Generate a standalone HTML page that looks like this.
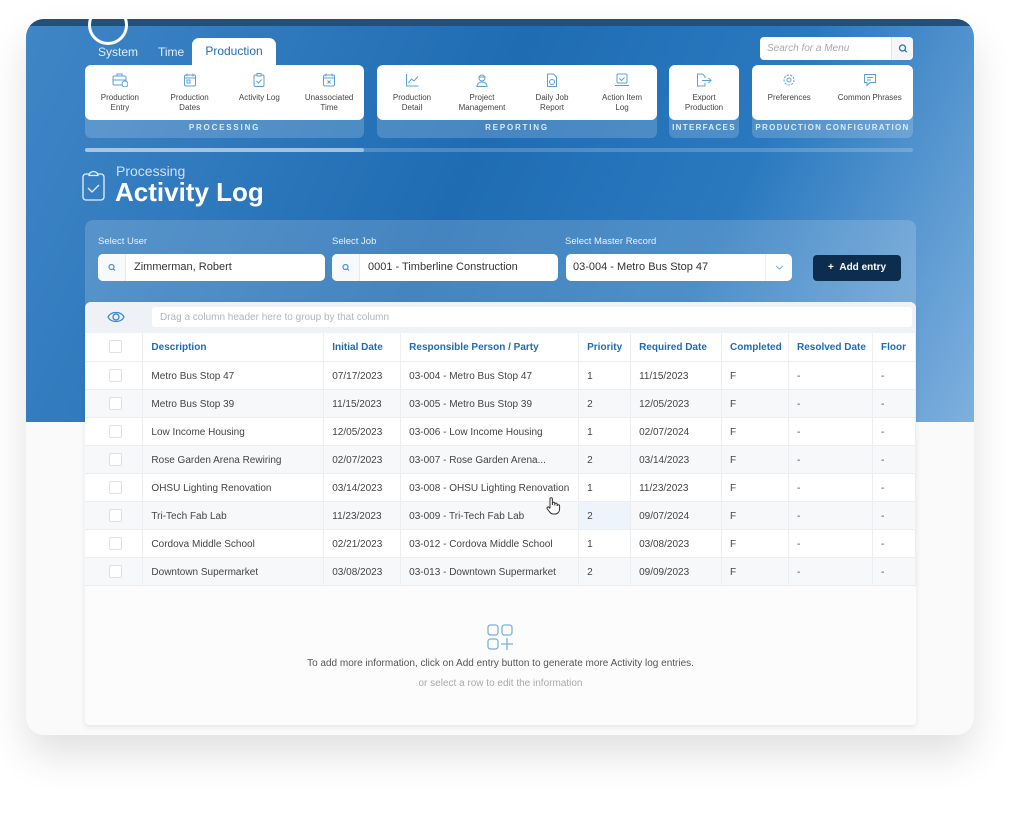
<!DOCTYPE html>
<html><head><meta charset="utf-8"><style>
*{box-sizing:border-box;margin:0;padding:0}
body{width:1024px;height:816px;background:#fff;font-family:"Liberation Sans",sans-serif;position:relative;overflow:hidden}
.card{position:absolute;left:26px;top:19px;width:948px;height:716px;border-radius:18px;background:#fafafa;overflow:hidden;box-shadow:0 20px 40px rgba(0,0,0,.12)}
.blue{position:absolute;left:0;top:0;width:948px;height:403px;background:linear-gradient(115deg,#3f86c6 0%,#1f6cb3 45%,#2a79bf 70%,#7eb0de 100%)}
.strip{position:absolute;left:0;top:0;width:948px;height:7px;background:#244f78}
.abs{position:absolute}
.logo{position:absolute;left:62px;top:-14px;width:40px;height:40px;border:3px solid #fff;border-radius:50%}
.tab{position:absolute;top:44px;color:#e3eef9;font-size:12px}
.ptab{position:absolute;left:166px;top:19px;width:84px;height:30px;background:#fff;border-radius:7px 7px 0 0;color:#1f6cb3;font-size:12px;text-align:center;line-height:26px}
.grp{position:absolute;top:46px;height:73px;border-radius:6px;background:rgba(255,255,255,.18)}
.grp .w{position:absolute;left:0;top:0;right:0;height:55px;background:#fff;border-radius:6px;display:flex;justify-content:space-around}
.grp .lb{position:absolute;left:0;right:0;top:58px;text-align:center;color:#dce9f6;font-size:8px;letter-spacing:1.8px;font-weight:bold}
.it{text-align:center;font-size:8px;color:#444;line-height:10px;padding-top:8px;width:72px}
.it svg{display:block;margin:0 auto 6px}
.search{position:absolute;left:734px;top:18px;width:153px;height:23px;background:#fff;border-radius:4px;font-size:10px;color:#aaa;font-style:italic;padding:6px 7px}
.search i{position:absolute;right:0;top:0;width:22px;height:23px;border-left:1px solid #e5e5e5;background:#f4f6f9;border-radius:0 4px 4px 0}
.filter{position:absolute;left:59px;top:201px;width:831px;height:90px;background:rgba(255,255,255,.17);border-radius:8px 8px 0 0}
.fl{position:absolute;top:16px;color:#e8f0f8;font-size:9.5px}
.inp{position:absolute;top:34px;height:27px;background:#fff;border-radius:5px;font-size:11px;color:#333;line-height:27px}
.inp .s{display:inline-block;width:28px;height:27px;border-right:1px solid #e8e8e8;background:#f7f9fb;border-radius:5px 0 0 5px;vertical-align:top;margin-right:8px;position:relative}
.btn{position:absolute;left:728px;top:35px;width:88px;height:26px;background:#0d2d4f;border-radius:4px;color:#fff;font-size:10px;font-weight:bold;text-align:center;line-height:26px}
.panel{position:absolute;left:59px;top:283px;width:831px;height:423px;background:#fcfcfd;border-radius:6px 6px 4px 4px;overflow:hidden;box-shadow:0 2px 6px rgba(0,0,0,.08)}
.grow{position:absolute;left:0;top:0;width:831px;height:31px;background:#eef2f7}
.drag{position:absolute;left:67px;top:5px;width:760px;height:20px;background:#fff;border-radius:3px;font-size:10px;color:#b0b6bd;padding:5px 8px}
table{position:absolute;left:0;top:31px;border-collapse:collapse;font-size:10px;color:#444;table-layout:fixed}
td,th{height:28px;border-right:1px solid #eceff2;border-bottom:1px solid #eceff2;padding-left:8px;padding-top:2px;text-align:left;white-space:nowrap;overflow:hidden;vertical-align:middle}
th{color:#1f6cb3;font-weight:bold;background:#fff}
tr.g td{background:#f6f8fa}
tr.w td{background:#fff}
.cb{display:inline-block;width:13px;height:13px;border:1px solid #dde1e6;border-radius:2px;background:#fff;margin-left:24px;vertical-align:middle}
.empty{position:absolute;left:0;width:831px;text-align:center}
</style></head><body>
<div class="card">
 <div class="blue"></div>
 <div class="strip"></div>
 <div class="logo"></div>
 <div class="tab" style="left:72px;top:26px">System</div>
 <div class="tab" style="left:132px;top:26px">Time</div>
 <div class="ptab">Production</div>
 <div class="search">Search for a Menu<i><svg width="22" height="23"><circle cx="10.5" cy="11" r="3" fill="none" stroke="#2a74bd" stroke-width="1.3"/><path d="M12.7 13.2l2 2" stroke="#2a74bd" stroke-width="1.3"/></svg></i></div>

 <div class="grp" style="left:59px;width:279px"><div class="w">
  <div class="it"><svg width="16" height="14"><rect x="1" y="3" width="13" height="9" rx="1.5" fill="none" stroke="#5aa0dc"/><path d="M5 3V1h5v2M1 7h13" stroke="#5aa0dc" fill="none"/><circle cx="13" cy="11" r="3" fill="#fff" stroke="#5aa0dc"/></svg>Production<br>Entry</div>
  <div class="it"><svg width="14" height="14"><rect x="1.5" y="2" width="11" height="11" rx="1.5" fill="none" stroke="#5aa0dc"/><path d="M4 0.5v3M10 0.5v3M1.5 5h11" stroke="#5aa0dc"/><rect x="4" y="7" width="3" height="3" fill="none" stroke="#5aa0dc"/></svg>Production<br>Dates</div>
  <div class="it"><svg width="14" height="14"><rect x="2" y="2" width="10" height="11.5" rx="1.5" fill="none" stroke="#5aa0dc"/><rect x="5" y="0.5" width="4" height="2.5" fill="#fff" stroke="#5aa0dc"/><path d="M4.5 8l2 2 3-3.5" fill="none" stroke="#5aa0dc"/></svg>Activity Log</div>
  <div class="it"><svg width="14" height="14"><rect x="1.5" y="2" width="11" height="11" rx="1.5" fill="none" stroke="#5aa0dc"/><path d="M4 0.5v3M10 0.5v3M1.5 5h11M5.5 7.5l3 3M8.5 7.5l-3 3" stroke="#5aa0dc"/></svg>Unassociated<br>Time</div>
 </div><div class="lb">PROCESSING</div></div>

 <div class="grp" style="left:351px;width:280px"><div class="w">
  <div class="it"><svg width="14" height="14"><path d="M1.5 1v12h12M3.5 10l3-4 2.5 2 4-4.5" fill="none" stroke="#5aa0dc"/></svg>Production<br>Detail</div>
  <div class="it"><svg width="14" height="14"><circle cx="7" cy="5" r="3" fill="none" stroke="#5aa0dc"/><path d="M3.5 4h7M2 13.5c0-3 2.5-4.5 5-4.5s5 1.5 5 4.5z" fill="none" stroke="#5aa0dc"/></svg>Project<br>Management</div>
  <div class="it"><svg width="14" height="14"><path d="M2.5 1h6l3 3v9.5h-9z" fill="none" stroke="#5aa0dc"/><circle cx="7" cy="9" r="2.5" fill="none" stroke="#5aa0dc"/></svg>Daily Job<br>Report</div>
  <div class="it"><svg width="16" height="14"><rect x="3" y="1" width="10" height="9" rx="1" fill="none" stroke="#5aa0dc"/><path d="M1 12.5h14M5.5 5.5l2 2 3-3" fill="none" stroke="#5aa0dc"/></svg>Action Item<br>Log</div>
 </div><div class="lb">REPORTING</div></div>

 <div class="grp" style="left:643px;width:70px"><div class="w">
  <div class="it"><svg width="16" height="14"><path d="M9 5V3.5L6.5 1H1.5v12h7.5V10" fill="none" stroke="#5aa0dc"/><path d="M6 7.5h9M12.5 5l2.5 2.5-2.5 2.5" fill="none" stroke="#5aa0dc"/></svg>Export<br>Production</div>
 </div><div class="lb" style="letter-spacing:1.3px">INTERFACES</div></div>

 <div class="grp" style="left:726px;width:161px"><div class="w">
  <div class="it"><svg width="14" height="14"><circle cx="7" cy="7" r="2" fill="none" stroke="#5aa0dc"/><circle cx="7" cy="7" r="5" fill="none" stroke="#5aa0dc" stroke-dasharray="2.2 1.3"/></svg>Preferences</div>
  <div class="it" style="width:84px"><svg width="14" height="14"><path d="M1.5 1.5h11v8H7l-3 3v-3H1.5z" fill="none" stroke="#5aa0dc"/><path d="M4 4.5h6M4 7h4" stroke="#5aa0dc"/></svg>Common Phrases</div>
 </div><div class="lb" style="letter-spacing:1.3px">PRODUCTION CONFIGURATION</div></div>

 <div class="abs" style="left:59px;top:129px;width:828px;height:4px;border-radius:2px;background:rgba(255,255,255,.2)"></div>
 <div class="abs" style="left:59px;top:129px;width:279px;height:4px;border-radius:2px;background:rgba(255,255,255,.45)"></div>

 <svg class="abs" style="left:56px;top:151px" width="24" height="32"><rect x="1" y="4" width="21" height="26" rx="3" fill="none" stroke="#e6f0fa" stroke-width="1.3"/><path d="M7 5.5a4.5 4 0 0 1 9 0z" fill="#3f86c6" stroke="#e6f0fa" stroke-width="1.3"/><path d="M6 18l4 4 7-7" fill="none" stroke="#e6f0fa" stroke-width="1.3"/></svg>
 <div class="abs" style="left:90px;top:144px;color:#cfe1f3;font-size:14px">Processing</div>
 <div class="abs" style="left:89px;top:158px;color:#fff;font-size:26px;font-weight:bold">Activity Log</div>

 <div class="filter">
  <div class="fl" style="left:13px">Select User</div>
  <div class="fl" style="left:247px">Select Job</div>
  <div class="fl" style="left:480px">Select Master Record</div>
  <div class="inp" style="left:13px;width:227px"><span class="s"><svg width="28" height="27"><circle cx="13.5" cy="13" r="2.5" fill="none" stroke="#4a90d9" stroke-width="1.2"/><path d="M15.3 14.8l1.7 1.7" stroke="#4a90d9" stroke-width="1.2"/></svg></span>Zimmerman, Robert</div>
  <div class="inp" style="left:247px;width:226px"><span class="s"><svg width="28" height="27"><circle cx="13.5" cy="13" r="2.5" fill="none" stroke="#4a90d9" stroke-width="1.2"/><path d="M15.3 14.8l1.7 1.7" stroke="#4a90d9" stroke-width="1.2"/></svg></span>0001 - Timberline Construction</div>
  <div class="inp" style="left:481px;width:226px;padding-left:7px">03-004 - Metro Bus Stop 47<span style="position:absolute;right:0;top:0;width:27px;height:27px;border-left:1px solid #eee"><svg width="27" height="27"><path d="M10 12l3.5 3 3.5-3" fill="none" stroke="#7aaee0" stroke-width="1.1"/></svg></span></div>
  <div class="btn">+&nbsp;&nbsp;Add entry</div>
 </div>

 <div class="panel">
  <div class="grow"><svg class="abs" style="left:22px;top:8px" width="18" height="14"><path d="M1 7c3-6 13-6 16 0-3 6-13 6-16 0z" fill="none" stroke="#3a86d0" stroke-width="1.3"/><circle cx="9" cy="7" r="3" fill="none" stroke="#3a86d0" stroke-width="1.3"/></svg><div class="drag">Drag a column header here to group by that column</div></div>
  <table>
   <colgroup><col style="width:58px"><col style="width:181px"><col style="width:77px"><col style="width:178px"><col style="width:52px"><col style="width:91px"><col style="width:67px"><col style="width:84px"><col style="width:43px"></colgroup>
   <tr><th style="padding:0"><span class="cb"></span></th><th>Description</th><th>Initial Date</th><th>Responsible Person / Party</th><th>Priority</th><th>Required Date</th><th>Completed</th><th>Resolved Date</th><th>Floor</th></tr>
   <tr class="w"><td style="padding:0"><span class="cb"></span></td><td>Metro Bus Stop 47</td><td>07/17/2023</td><td>03-004 - Metro Bus Stop 47</td><td>1</td><td>11/15/2023</td><td>F</td><td>-</td><td>-</td></tr>
   <tr class="g"><td style="padding:0"><span class="cb"></span></td><td>Metro Bus Stop 39</td><td>11/15/2023</td><td>03-005 - Metro Bus Stop 39</td><td>2</td><td>12/05/2023</td><td>F</td><td>-</td><td>-</td></tr>
   <tr class="w"><td style="padding:0"><span class="cb"></span></td><td>Low Income Housing</td><td>12/05/2023</td><td>03-006 - Low Income Housing</td><td>1</td><td>02/07/2024</td><td>F</td><td>-</td><td>-</td></tr>
   <tr class="g"><td style="padding:0"><span class="cb"></span></td><td>Rose Garden Arena Rewiring</td><td>02/07/2023</td><td>03-007 - Rose Garden Arena...</td><td>2</td><td>03/14/2023</td><td>F</td><td>-</td><td>-</td></tr>
   <tr class="w"><td style="padding:0"><span class="cb"></span></td><td>OHSU Lighting Renovation</td><td>03/14/2023</td><td>03-008 - OHSU Lighting Renovation</td><td>1</td><td>11/23/2023</td><td>F</td><td>-</td><td>-</td></tr>
   <tr class="g"><td style="padding:0"><span class="cb"></span></td><td>Tri-Tech Fab Lab</td><td>11/23/2023</td><td>03-009 - Tri-Tech Fab Lab</td><td style="background:#eef4fb">2</td><td>09/07/2024</td><td>F</td><td>-</td><td>-</td></tr>
   <tr class="w"><td style="padding:0"><span class="cb"></span></td><td>Cordova Middle School</td><td>02/21/2023</td><td>03-012 - Cordova Middle School</td><td>1</td><td>03/08/2023</td><td>F</td><td>-</td><td>-</td></tr>
   <tr class="g"><td style="padding:0"><span class="cb"></span></td><td>Downtown Supermarket</td><td>03/08/2023</td><td>03-013 - Downtown Supermarket</td><td>2</td><td>09/09/2023</td><td>F</td><td>-</td><td>-</td></tr>
  </table>
  <svg class="abs" style="left:402px;top:322px" width="28" height="28"><rect x="1" y="1" width="10" height="10" rx="2.5" fill="none" stroke="#7ab0e3" stroke-width="1.3"/><rect x="15" y="1" width="10" height="10" rx="2.5" fill="none" stroke="#7ab0e3" stroke-width="1.3"/><rect x="1" y="15" width="10" height="10" rx="2.5" fill="none" stroke="#7ab0e3" stroke-width="1.3"/><path d="M20 14v12M14 20h12" stroke="#7ab0e3" stroke-width="1.3"/></svg>
  <div class="empty" style="top:356px;font-size:10px;color:#555">To add more information, click on Add entry button to generate more Activity log entries.</div>
  <div class="empty" style="top:376px;font-size:10px;color:#aaa">or select a row to edit the information</div>
 </div>
 <svg class="abs" style="left:519px;top:477px" width="16" height="20"><path d="M5 12V3a1.2 1.2 0 0 1 2.4 0v6M7.4 9V7.5a1.2 1.2 0 0 1 2.4 0V9.5M9.8 9V8.3a1.2 1.2 0 0 1 2.4 0v1.5M12.2 10a1.2 1.2 0 0 1 2.4 0v3c0 3-2 5-4.5 5H8c-2 0-3-1.5-4.5-3.5L2 12.5a1.2 1.2 0 0 1 2-1.2L5 12.5" fill="#fff" stroke="#333" stroke-width="1"/></svg>
</div>
</body></html>
